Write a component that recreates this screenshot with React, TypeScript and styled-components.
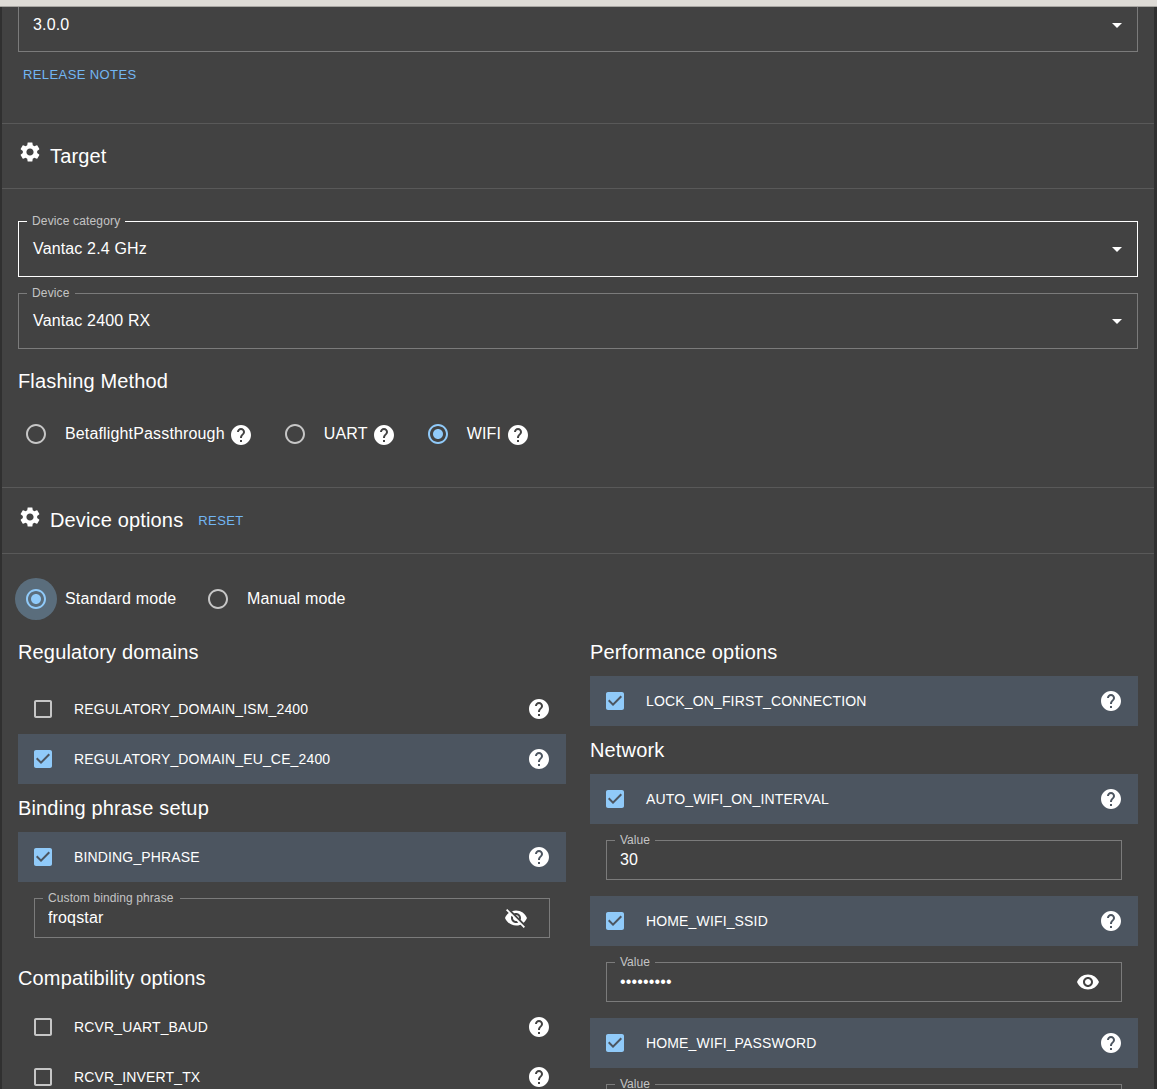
import React from "react";
import styled, { createGlobalStyle } from "styled-components";

const Global = createGlobalStyle`
  html, body { margin: 0; padding: 0; height: 1089px; overflow: hidden; background: #303030; }
  * { box-sizing: border-box; }
  #root { height: 1089px; overflow: hidden; }
`;

const ICONS = {
  settings: "M19.14 12.94c.04-.3.06-.61.06-.94 0-.32-.02-.64-.07-.94l2.03-1.58c.18-.14.23-.41.12-.61l-1.92-3.32c-.12-.22-.37-.29-.59-.22l-2.39.96c-.5-.38-1.03-.7-1.62-.94l-.36-2.54c-.04-.24-.24-.41-.48-.41h-3.84c-.24 0-.43.17-.47.41l-.36 2.54c-.59.24-1.13.57-1.62.94l-2.39-.96c-.22-.08-.47 0-.59.22L2.74 8.87c-.12.21-.08.47.12.61l2.03 1.58c-.05.3-.09.63-.09.94s.02.64.07.94l-2.03 1.58c-.18.14-.23.41-.12.61l1.92 3.32c.12.22.37.29.59.22l2.39-.96c.5.38 1.03.7 1.62.94l.36 2.54c.05.24.24.41.48.41h3.84c.24 0 .44-.17.47-.41l.36-2.54c.59-.24 1.13-.56 1.62-.94l2.39.96c.22.08.47 0 .59-.22l1.92-3.32c.12-.22.07-.47-.12-.61l-2.01-1.58zM12 15.6c-1.98 0-3.6-1.62-3.6-3.6s1.62-3.6 3.6-3.6 3.6 1.62 3.6 3.6-1.62 3.6-3.6 3.6z",
  help: "M12 2C6.48 2 2 6.48 2 12s4.48 10 10 10 10-4.48 10-10S17.52 2 12 2zm1 17h-2v-2h2v2zm2.07-7.75l-.9.92C13.45 12.9 13 13.5 13 15h-2v-.5c0-1.1.45-2.1 1.17-2.83l1.24-1.26c.37-.36.59-.86.59-1.41 0-1.1-.9-2-2-2s-2 .9-2 2H8c0-2.21 1.79-4 4-4s4 1.79 4 4c0 .88-.36 1.68-.93 2.25z",
  eye: "M12 4.5C7 4.5 2.73 7.61 1 12c1.73 4.39 6 7.5 11 7.5s9.27-3.11 11-7.5c-1.73-4.39-6-7.5-11-7.5zM12 17c-2.76 0-5-2.24-5-5s2.24-5 5-5 5 2.24 5 5-2.24 5-5 5zm0-8c-1.66 0-3 1.34-3 3s1.34 3 3 3 3-1.34 3-3-1.34-3-3-3z",
  eyeOff: "M12 7c2.76 0 5 2.24 5 5 0 .65-.13 1.26-.36 1.83l2.92 2.92c1.51-1.26 2.7-2.89 3.43-4.75-1.73-4.39-6-7.5-11-7.5-1.4 0-2.74.25-3.98.7l2.16 2.16C10.74 7.13 11.35 7 12 7zM2 4.27l2.28 2.28.46.46C3.08 8.3 1.78 10.02 1 12c1.73 4.39 6 7.5 11 7.5 1.55 0 3.03-.3 4.38-.84l.42.42L19.73 22 21 20.73 3.27 3 2 4.27zM7.53 9.8l1.55 1.55c-.05.21-.08.43-.08.65 0 1.66 1.34 3 3 3 .22 0 .44-.03.65-.08l1.55 1.55c-.67.33-1.41.53-2.2.53-2.76 0-5-2.24-5-5 0-.79.2-1.53.53-2.2zm4.31-.78l3.15 3.15.02-.16c0-1.66-1.34-3-3-3l-.17.01z",
  checked: "M19 3H5c-1.11 0-2 .9-2 2v14c0 1.1.89 2 2 2h14c1.11 0 2-.9 2-2V5c0-1.1-.89-2-2-2zm-9 14l-5-5 1.41-1.41L10 14.17l7.59-7.59L19 8l-9 9z",
  unchecked: "M19 5v14H5V5h14m0-2H5c-1.1 0-2 .9-2 2v14c0 1.1.9 2 2 2h14c1.1 0 2-.9 2-2V5c0-1.1-.9-2-2-2z",
  radioOff: "M12 2C6.48 2 2 6.48 2 12s4.48 10 10 10 10-4.48 10-10S17.52 2 12 2zm0 18c-4.42 0-8-3.58-8-8s3.58-8 8-8 8 3.58 8 8-3.58 8-8 8z",
  radioDot: "M12 7c-2.76 0-5 2.24-5 5s2.24 5 5 5 5-2.24 5-5-2.24-5-5-5z",
  drop: "M7 10l5 5 5-5z",
};

const Svg = styled.svg<{ $color?: string }>`
  width: 24px;
  height: 24px;
  flex: none;
  display: block;
  fill: ${(p) => p.$color ?? "#fff"};
`;

const Icon = ({ name, color }: { name: keyof typeof ICONS; color?: string }) => (
  <Svg viewBox="0 0 24 24" $color={color}><path d={ICONS[name]} /></Svg>
);

const Page = styled.div`
  height: 1089px;
  overflow: hidden;
  display: flex;
  flex-direction: column;
  font-family: "Liberation Sans", Arial, sans-serif;
  color: #fff;
`;
const BrowserEdge = styled.div`
  height: 7px;
  flex: none;
  background: #dedbd6;
  border-bottom: 1px solid #a8a6a2;
`;
const Paper = styled.main`
  flex: 1;
  margin: 0 3px 0 2px;
  background: #424242;
  overflow: hidden;
`;
const Section = styled.section`
  padding: 0 16px;
`;
const Box = styled.div<{ $focus?: boolean; $cut?: boolean }>`
  position: relative;
  height: ${(p) => (p.$cut ? 45 : 56)}px;
  display: flex;
  align-items: center;
  justify-content: space-between;
  padding: ${(p) => (p.$cut ? "0 8px 8px 14px" : "0 8px 0 14px")};
  border: 1px solid ${(p) => (p.$focus ? "#fff" : "rgba(255,255,255,0.3)")};
  ${(p) => p.$cut && "border-top: none;"}
  font-size: 16px;
  letter-spacing: 0.15px;
  margin-top: ${(p) => (p.$cut ? 0 : 16)}px;
`;
const FloatLabel = styled.label<{ $wide?: boolean }>`
  position: absolute;
  top: -8px;
  left: 8px;
  padding: 0 ${(p) => (p.$wide ? 6 : 5)}px 0 5px;
  background: #424242;
  font-size: 12px;
  line-height: 14px;
  ${(p) => p.$wide && "letter-spacing: 0.1px;"}
  color: rgba(255, 255, 255, 0.7);
`;
const TextLink = styled.a`
  font-size: 13px;
  line-height: 22px;
  letter-spacing: 0.4px;
  color: #72b6f3;
  text-transform: uppercase;
`;
const ReleaseLink = styled(TextLink)`
  display: block;
  margin: 12px 0 0 5px;
`;
const Spacer = styled.div<{ $h: number }>`
  height: ${(p) => p.$h}px;
`;
const Header = styled.header<{ $tall?: boolean }>`
  height: ${(p) => (p.$tall ? 67 : 66)}px;
  padding: 0 16px ${(p) => (p.$tall ? 1 : 0)}px;
  display: flex;
  align-items: center;
  border-top: 1px solid rgba(255, 255, 255, 0.12);
  border-bottom: 1px solid rgba(255, 255, 255, 0.12);
`;
const HeaderIcon = styled.span<{ $low?: boolean }>`
  margin: ${(p) => (p.$low ? -6 : -8)}px 8px 0 0;
`;
const HeaderTitle = styled.h2`
  margin: 0 15px 0 0;
  font-size: 20px;
  line-height: 32px;
  font-weight: 400;
  letter-spacing: 0.15px;
`;
const ResetLink = styled(TextLink)`
  margin-top: 1px;
`;
const Heading = styled.h3`
  margin: 0;
  height: 48px;
  display: flex;
  align-items: center;
  font-size: 20px;
  font-weight: 400;
  letter-spacing: 0.15px;
`;
const RadioRow = styled.div`
  display: flex;
  align-items: center;
  height: 42px;
  margin-left: -3px;
  font-size: 16px;
  letter-spacing: 0.15px;
`;
const RadioItem = styled.label`
  display: flex;
  align-items: center;
  margin-right: 20.6px;
`;
const RadioControl = styled.span<{ $halo?: boolean }>`
  position: relative;
  width: 42px;
  height: 42px;
  margin-right: 8px;
  display: flex;
  align-items: center;
  justify-content: center;
  border-radius: 50%;
  background: ${(p) => (p.$halo ? "rgba(144,202,249,0.32)" : "transparent")};
`;
const Dot = styled.span`
  position: absolute;
  inset: 9px;
`;
const HelpWrap = styled.span`
  margin: 1px 0 0 4.5px;
`;
const Columns = styled.div`
  display: grid;
  grid-template-columns: 548px 548px;
  gap: 24px;
`;
const Col = styled.div`
  min-width: 0;
`;
const List = styled.div<{ $pad?: boolean }>`
  padding-top: ${(p) => (p.$pad ? 8 : 0)}px;
`;
const OptionRow = styled.div<{ $on?: boolean }>`
  height: 50px;
  display: flex;
  align-items: center;
  padding: 0 15.4px 0 13px;
  background: ${(p) => (p.$on ? "#4c5560" : "transparent")};
  font-size: 14px;
  letter-spacing: 0.15px;
`;
const OptionLabel = styled.span`
  flex: 1;
  margin-left: 19px;
`;
const FieldWrap = styled.div`
  position: relative;
  height: 40px;
  margin: 16px;
  display: flex;
  align-items: center;
  padding: 0 21px 1px 13px;
  border: 1px solid rgba(255, 255, 255, 0.3);
`;
const FieldInput = styled.input`
  flex: 1;
  min-width: 0;
  border: 0;
  padding: 0;
  outline: 0;
  background: transparent;
  color: #fff;
  font: inherit;
  font-size: 16px;
  letter-spacing: 0.15px;
`;
const FieldIcon = styled.span`
  margin-top: 1px;
`;

const Select = ({ label, value, focus }: { label: string; value: string; focus?: boolean }) => (
  <Box $focus={focus}>
    <FloatLabel>{label}</FloatLabel>
    {value}
    <Icon name="drop" />
  </Box>
);
const Radio = ({ label, on, halo, help }: { label: string; on?: boolean; halo?: boolean; help?: boolean }) => (
  <RadioItem>
    <RadioControl $halo={halo}>
      <Icon name="radioOff" color={on ? "#90caf9" : "rgba(255,255,255,0.7)"} />
      {on && <Dot><Icon name="radioDot" color="#90caf9" /></Dot>}
    </RadioControl>
    {label}
    {help && <HelpWrap><Icon name="help" /></HelpWrap>}
  </RadioItem>
);
const Option = ({ label, on }: { label: string; on?: boolean }) => (
  <OptionRow $on={on}>
    <Icon name={on ? "checked" : "unchecked"} color={on ? "#90caf9" : "rgba(255,255,255,0.7)"} />
    <OptionLabel>{label}</OptionLabel>
    <Icon name="help" />
  </OptionRow>
);
const Field = ({ label, value, type = "text", icon, wide }: { label: string; value: string; type?: string; icon?: "eye" | "eyeOff"; wide?: boolean }) => (
  <FieldWrap>
    <FloatLabel $wide={wide}>{label}</FloatLabel>
    <FieldInput type={type} value={value} readOnly />
    {icon && <FieldIcon><Icon name={icon} /></FieldIcon>}
  </FieldWrap>
);

export default function App() {
  return (
    <Page>
      <Global />
      <BrowserEdge />
      <Paper>
        <Section>
          <Box $cut>3.0.0<Icon name="drop" /></Box>
          <ReleaseLink>Release notes</ReleaseLink>
          <Spacer $h={37} />
        </Section>
        <Header>
          <HeaderIcon><Icon name="settings" /></HeaderIcon>
          <HeaderTitle>Target</HeaderTitle>
        </Header>
        <Section>
          <Spacer $h={16} />
          <Select label="Device category" value="Vantac 2.4 GHz" focus />
          <Select label="Device" value="Vantac 2400 RX" />
          <Spacer $h={8} />
          <Heading>Flashing Method</Heading>
          <Spacer $h={8} />
          <RadioRow>
            <Radio label="BetaflightPassthrough" help />
            <Radio label="UART" help />
            <Radio label="WIFI" on help />
          </RadioRow>
          <Spacer $h={32} />
        </Section>
        <Header $tall>
          <HeaderIcon $low><Icon name="settings" /></HeaderIcon>
          <HeaderTitle>Device options</HeaderTitle>
          <ResetLink>Reset</ResetLink>
        </Header>
        <Section>
          <Spacer $h={24} />
          <RadioRow>
            <Radio label="Standard mode" on halo />
            <Radio label="Manual mode" />
          </RadioRow>
          <Spacer $h={8} />
          <Columns>
            <Col>
              <Heading>Regulatory domains</Heading>
              <List $pad>
                <Option label="REGULATORY_DOMAIN_ISM_2400" />
                <Option label="REGULATORY_DOMAIN_EU_CE_2400" on />
              </List>
              <Heading>Binding phrase setup</Heading>
              <List>
                <Option label="BINDING_PHRASE" on />
                <Field label="Custom binding phrase" value="froqstar" icon="eyeOff" wide />
              </List>
              <Heading>Compatibility options</Heading>
              <List>
                <Option label="RCVR_UART_BAUD" />
                <Option label="RCVR_INVERT_TX" />
              </List>
            </Col>
            <Col>
              <Heading>Performance options</Heading>
              <List>
                <Option label="LOCK_ON_FIRST_CONNECTION" on />
              </List>
              <Heading>Network</Heading>
              <List>
                <Option label="AUTO_WIFI_ON_INTERVAL" on />
                <Field label="Value" value="30" />
                <Option label="HOME_WIFI_SSID" on />
                <Field label="Value" value="homewifi1" type="password" icon="eye" />
                <Option label="HOME_WIFI_PASSWORD" on />
                <FieldWrap>
                  <FloatLabel>Value</FloatLabel>
                </FieldWrap>
              </List>
            </Col>
          </Columns>
        </Section>
      </Paper>
    </Page>
  );
}
